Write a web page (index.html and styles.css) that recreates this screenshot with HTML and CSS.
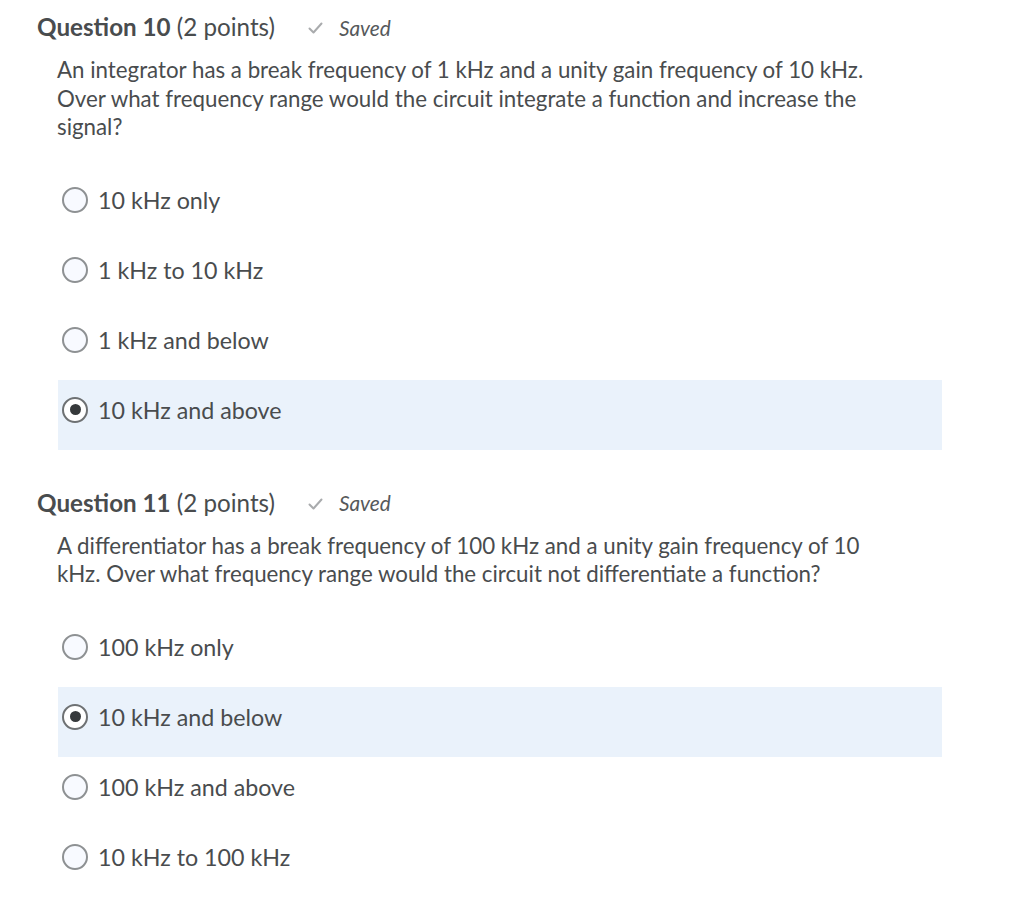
FILE: index.html
```html
<!DOCTYPE html>
<html lang="en">
<head>
<meta charset="utf-8">
<title>Quiz</title>
<link rel="stylesheet" href="styles.css">
</head>
<body>
<div class="page">
  <section class="question">
    <div class="q-head">
      <h2 class="q-title"><strong>Question 10</strong> (2 points)</h2>
      <span class="saved"><svg class="check" width="15" height="12" viewBox="0 0 15 12"><polyline points="1.5,6.5 5.5,10.5 13.5,1.5" fill="none" stroke="#a9abad" stroke-width="2" stroke-linecap="round" stroke-linejoin="round"/></svg>Saved</span>
    </div>
    <p class="q-text">An integrator has a break frequency of 1 kHz and a unity gain frequency of 10 kHz. Over what frequency range would the circuit integrate a function and increase the signal?</p>
    <ul class="options">
      <li class="option"><span class="radio"></span><span class="label">10 kHz only</span></li>
      <li class="option"><span class="radio"></span><span class="label">1 kHz to 10 kHz</span></li>
      <li class="option"><span class="radio"></span><span class="label">1 kHz and below</span></li>
      <li class="option selected"><span class="radio checked"></span><span class="label">10 kHz and above</span></li>
    </ul>
  </section>
  <section class="question">
    <div class="q-head">
      <h2 class="q-title"><strong>Question 11</strong> (2 points)</h2>
      <span class="saved"><svg class="check" width="15" height="12" viewBox="0 0 15 12"><polyline points="1.5,6.5 5.5,10.5 13.5,1.5" fill="none" stroke="#a9abad" stroke-width="2" stroke-linecap="round" stroke-linejoin="round"/></svg>Saved</span>
    </div>
    <p class="q-text">A differentiator has a break frequency of 100 kHz and a unity gain frequency of 10 kHz. Over what frequency range would the circuit not differentiate a function?</p>
    <ul class="options">
      <li class="option"><span class="radio"></span><span class="label">100 kHz only</span></li>
      <li class="option selected"><span class="radio checked"></span><span class="label">10 kHz and below</span></li>
      <li class="option"><span class="radio"></span><span class="label">100 kHz and above</span></li>
      <li class="option"><span class="radio"></span><span class="label">10 kHz to 100 kHz</span></li>
    </ul>
  </section>
</div>
</body>
</html>
```
FILE: styles.css
```css
html, body {
  margin: 0;
  padding: 0;
  background: #ffffff;
}
body {
  font-family: Lato, "Open Sans", "Liberation Sans", sans-serif;
  color: #494c4e;
}
.page {
  padding: 12px 82px 0 37px;
}
.question {
  margin-bottom: 38px;
}
.q-head {
  display: flex;
  align-items: center;
  height: 30px;
}
.q-title {
  margin: 0;
  font-size: 24.2px;
  font-weight: 400;
  line-height: 30px;
}
.q-title strong {
  font-weight: 700;
}
.saved {
  display: inline-flex;
  align-items: center;
  margin-left: 33px;
  font-size: 20.8px;
  font-style: italic;
  color: #56595b;
}
.check {
  margin-right: 16px;
  margin-top: 2px;
}
.q-text {
  margin: 14px 0 0 20px;
  font-size: 22.3px;
  line-height: 28.5px;
  max-width: 845px;
}
.options {
  list-style: none;
  margin: 28px 0 0 21px;
  padding: 0;
}
.option {
  display: flex;
  align-items: center;
  height: 70px;
  box-sizing: border-box;
  padding: 0 0 10px 4px;
  font-size: 23.25px;
}
.option.selected {
  background: #eaf2fb;
}
.radio {
  width: 22px;
  height: 22px;
  border: 2px solid #8e9193;
  border-radius: 50%;
  background: #f8faff;
  flex: none;
  display: flex;
  align-items: center;
  justify-content: center;
}
.radio.checked {
  border-color: #6e7173;
  background: #ffffff;
}
.radio.checked::after {
  content: "";
  width: 11px;
  height: 11px;
  border-radius: 50%;
  background: #36393b;
}
.label {
  margin-left: 10px;
  line-height: 28px;
}
```
